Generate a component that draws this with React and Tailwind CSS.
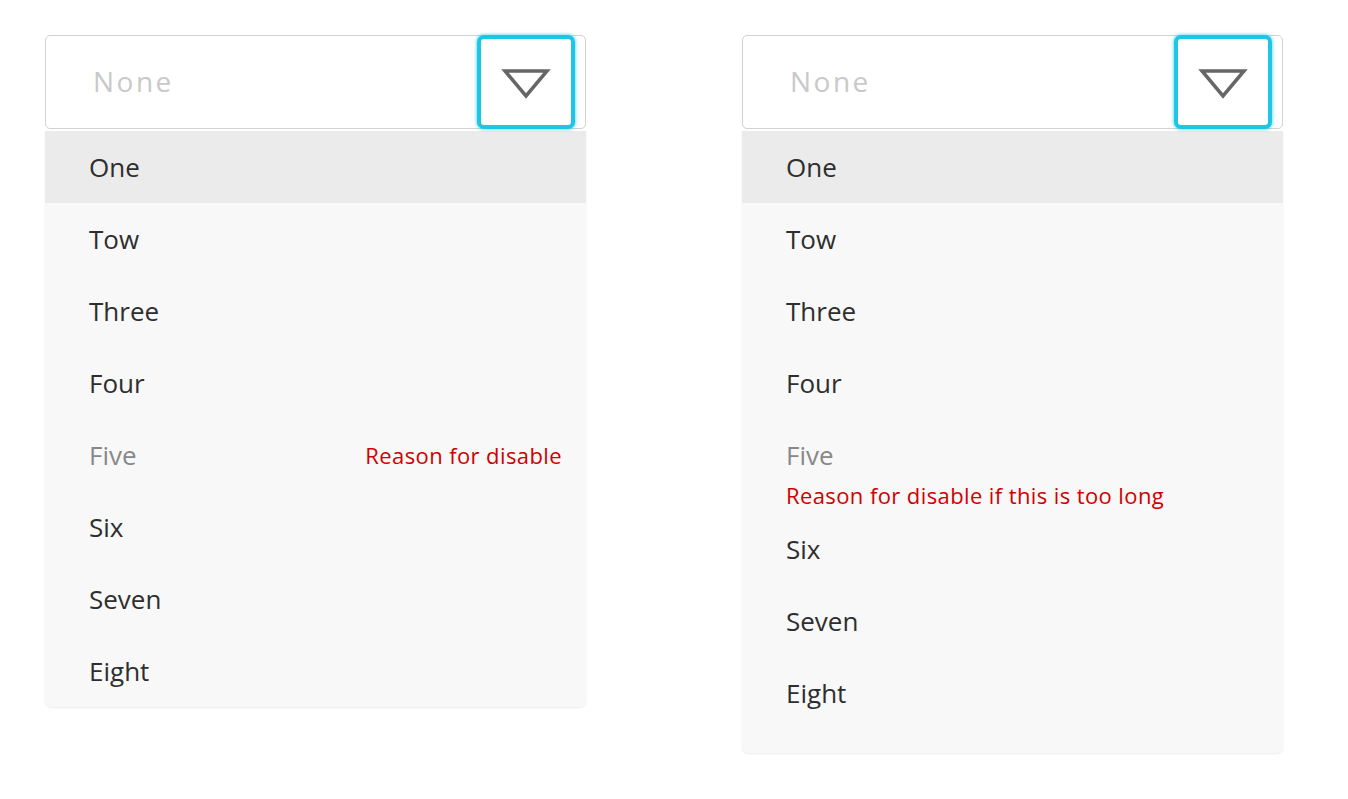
import React from 'react';

const ITEMS = ['One', 'Tow', 'Three', 'Four', 'Five', 'Six', 'Seven', 'Eight'];

function Trigger() {
  return (
    <div className="relative h-[94px] rounded-[5px] border border-[#d2d2d2] bg-white">
      <div className="flex h-full items-center pb-[2px] pl-[47px] text-[28px] tracking-[2.5px] text-[#c9c9c9]">None</div>
      <div className="absolute right-[10px] top-[-1px] flex h-[94px] w-[98px] items-center justify-center rounded-[7px] border-[4px] border-[#1ec6e6] bg-white pt-[4px] shadow-[0_0_3px_1px_rgba(30,198,230,0.55)]">
        <svg width="50" height="32" viewBox="0 0 50 32">
          <path d="M4 3 L46 3 L25 28 Z" fill="none" stroke="#666666" strokeWidth="3.5" strokeLinejoin="miter" />
        </svg>
      </div>
    </div>
  );
}

function Item({ label, active, children }) {
  return (
    <div className={`flex h-[72px] items-center pl-[44px] pr-[24px] ${active ? 'bg-[#ebebeb]' : ''}`}>
      {children || <span className="text-[26px] leading-[32px] text-[#2e2e2e]">{label}</span>}
    </div>
  );
}

function Dropdown({ long }) {
  return (
    <div className="w-[541px]">
      <Trigger />
      <div className={`mt-[2px] overflow-hidden rounded-b-[6px] bg-[#f8f8f8] shadow-[0_1px_2px_rgba(0,0,0,0.08)] ${long ? 'pb-[24px]' : ''}`}>
        {ITEMS.map((label, i) => {
          if (label === 'Five') {
            if (long) {
              return (
                <div key={label} className="pl-[44px] pr-[24px] pt-[20px] pb-[4px]">
                  <div className="text-[26px] leading-[32px] text-[#888888]">Five</div>
                  <div className="mt-[10px] text-[22px] leading-[28px] tracking-[0.4px] text-[#d00000]">Reason for disable if this is too long</div>
                </div>
              );
            }
            return (
              <Item key={label}>
                <span className="text-[26px] leading-[32px] text-[#888888]">Five</span>
                <span className="ml-auto text-[22px] leading-[28px] tracking-[0.4px] text-[#d00000]">Reason for disable</span>
              </Item>
            );
          }
          return <Item key={label} label={label} active={i === 0} />;
        })}
      </div>
    </div>
  );
}

export default function App() {
  return (
    <div className="flex min-h-screen items-start gap-[156px] bg-white pl-[45px] pt-[35px]" style={{ fontFamily: '"Open Sans", "Noto Sans", sans-serif' }}>
      <Dropdown />
      <Dropdown long />
    </div>
  );
}
